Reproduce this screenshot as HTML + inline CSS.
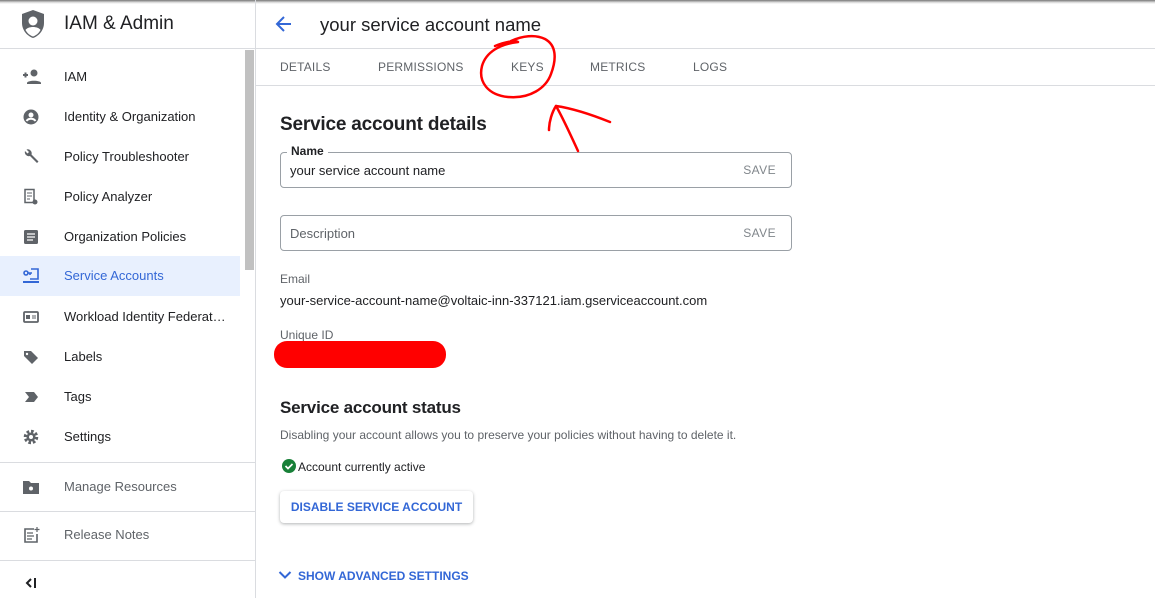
<!DOCTYPE html>
<html><head><meta charset="utf-8"><style>
*{box-sizing:border-box;margin:0;padding:0}
body{width:1155px;height:598px;overflow:hidden;background:#fff;font-family:"Liberation Sans",Arial,sans-serif;position:relative;color:#202124}
.abs{position:absolute}
.topsh{position:absolute;left:0;top:0;width:1155px;height:4px;background:linear-gradient(#777,#ddd 60%,#fff)}
.side{position:absolute;left:0;top:0;width:256px;height:598px;border-right:1px solid #dadce0}
.nav{position:absolute;left:0;width:240px;height:40px;font-size:13px;line-height:40px;padding-left:64px;color:#202124}
.nav svg{position:absolute;left:22px;top:11px}
.tab{position:absolute;top:60px;font-size:12px;color:#5f6368;letter-spacing:.2px}
.lbl{font-size:12px;color:#5f6368}
.field{position:absolute;left:280px;width:512px;height:36px;border:1px solid #9aa0a6;border-radius:4px}
.save{position:absolute;right:15px;top:10px;font-size:12px;color:#80868b;letter-spacing:.4px}
</style></head><body>
<div class="topsh"></div>
<div class="side">
  <svg class="abs" style="left:20px;top:9px" width="26" height="30" viewBox="0 0 26 30"><path d="M13 1 L24 5 V14 C24 21 19 27 13 29 C7 27 2 21 2 14 V5 Z" fill="#5f6368"/><circle cx="13" cy="12" r="4.5" fill="#fff"/><path d="M5.5 21 C8 17 18 17 20.5 21 C18.5 24.5 16 26.5 13 27.5 C10 26.5 7.5 24.5 5.5 21Z" fill="#fff"/></svg>
  <div class="abs" style="left:64px;top:13px;font-size:19px">IAM &amp; Admin</div>
  <div class="abs" style="left:0;top:48px;width:255px;height:1px;background:#dadce0"></div>
  <div class="abs" style="left:245px;top:50px;width:9px;height:220px;background:#c1c1c1"></div>
  <div class="nav" style="top:57px"><svg width="20" height="18" viewBox="0 0 20 18"><path d="M1 7h5M3.5 4.5v5" stroke="#5f6368" stroke-width="2"/><circle cx="12" cy="5" r="3.5" fill="#5f6368"/><path d="M5 15c0-3 14-3 14 0v1H5z" fill="#5f6368"/></svg>IAM</div>
  <div class="nav" style="top:97px"><svg width="18" height="18" viewBox="0 0 18 18"><circle cx="9" cy="9" r="7.5" fill="#5f6368"/><circle cx="9" cy="7" r="2.5" fill="#fff"/><path d="M4.5 13c2-3 7-3 9 0" stroke="#fff" stroke-width="2" fill="none"/></svg>Identity &amp; Organization</div>
  <div class="nav" style="top:137px"><svg width="18" height="18" viewBox="0 0 18 18"><path d="M3 3a4 4 0 0 0 5 5l7 7 1.5-1.5-7-7a4 4 0 0 0-5-5l2.5 2.5-1.5 1.5z" fill="#5f6368"/></svg>Policy Troubleshooter</div>
  <div class="nav" style="top:177px"><svg width="18" height="18" viewBox="0 0 18 18"><rect x="3" y="1.5" width="9" height="13" fill="none" stroke="#5f6368" stroke-width="1.5"/><path d="M5 5h5M5 8h5M5 11h3" stroke="#5f6368"/><circle cx="13" cy="14" r="2.5" fill="#5f6368"/></svg>Policy Analyzer</div>
  <div class="nav" style="top:217px"><svg width="18" height="18" viewBox="0 0 18 18"><rect x="2" y="2" width="14" height="14" rx="1.5" fill="#5f6368"/><path d="M5 6h8M5 9h8M5 12h6" stroke="#fff" stroke-width="1.2"/></svg>Organization Policies</div>
  <div class="nav" style="top:256px;background:#e8f0fe;color:#3367d6"><svg width="18" height="18" viewBox="0 0 18 18"><circle cx="4" cy="6" r="2" fill="none" stroke="#3367d6" stroke-width="1.6"/><path d="M6 6h4M8 6v2" stroke="#3367d6" stroke-width="1.6"/><path d="M9 2h7v10H8" fill="none" stroke="#3367d6" stroke-width="1.6"/><path d="M1 15h16" stroke="#3367d6" stroke-width="2"/></svg>Service Accounts</div>
  <div class="nav" style="top:297px"><svg width="18" height="18" viewBox="0 0 18 18"><rect x="2" y="4" width="14" height="10" rx="1" fill="none" stroke="#5f6368" stroke-width="1.8"/><rect x="4" y="7" width="4" height="4" fill="#5f6368"/><path d="M10 8h4M10 10h4" stroke="#5f6368"/></svg>Workload Identity Federat…</div>
  <div class="nav" style="top:337px"><svg width="18" height="18" viewBox="0 0 18 18"><path d="M2 3h7l7 7-6 6-8-8z" fill="#5f6368"/><circle cx="5" cy="6" r="1.2" fill="#fff"/></svg>Labels</div>
  <div class="nav" style="top:377px"><svg width="18" height="18" viewBox="0 0 18 18"><path d="M3 4h9l4 5-4 5H3l4-5z" fill="#5f6368"/></svg>Tags</div>
  <div class="nav" style="top:417px"><svg width="18" height="18" viewBox="0 0 18 18"><circle cx="9" cy="9" r="5.5" fill="none" stroke="#5f6368" stroke-width="3.5" stroke-dasharray="2.5 1.8"/><circle cx="9" cy="9" r="4.5" fill="#5f6368"/><circle cx="9" cy="9" r="2" fill="#fff"/></svg>Settings</div>
  <div class="abs" style="left:0;top:462px;width:255px;height:1px;background:#dadce0"></div>
  <div class="nav" style="top:467px;color:#5f6368"><svg width="18" height="18" viewBox="0 0 18 18"><path d="M1 3h6l2 2h8v11H1z" fill="#5f6368"/><circle cx="9" cy="10.5" r="2" fill="#fff"/></svg>Manage Resources</div>
  <div class="abs" style="left:0;top:511px;width:255px;height:1px;background:#dadce0"></div>
  <div class="nav" style="top:515px;color:#5f6368"><svg width="18" height="18" viewBox="0 0 18 18"><path d="M12 3H3v13h12V8" fill="none" stroke="#5f6368" stroke-width="1.6"/><path d="M5 7h6M5 10h7M5 13h5M15 1v5M12.5 3.5h5" stroke="#5f6368" stroke-width="1.2"/></svg>Release Notes</div>
  <div class="abs" style="left:0;top:560px;width:255px;height:1px;background:#dadce0"></div>
  <svg class="abs" style="left:25px;top:577px" width="14" height="12" viewBox="0 0 14 12"><path d="M6 2L2 6l4 4" stroke="#202124" stroke-width="2" fill="none"/><path d="M10 1v10" stroke="#202124" stroke-width="2"/></svg>
</div>

<svg class="abs" style="left:275px;top:15px" width="18" height="18" viewBox="0 0 18 18"><path d="M16 9H3M9 2L2 9l7 7" stroke="#3367d6" stroke-width="2" fill="none"/></svg>
<div class="abs" style="left:320px;top:14px;font-size:18.5px">your service account name</div>
<div class="abs" style="left:256px;top:48px;width:899px;height:1px;background:#dadce0"></div>
<div class="tab" style="left:280px">DETAILS</div>
<div class="tab" style="left:378px">PERMISSIONS</div>
<div class="tab" style="left:511px">KEYS</div>
<div class="tab" style="left:590px">METRICS</div>
<div class="tab" style="left:693px">LOGS</div>
<div class="abs" style="left:256px;top:85px;width:899px;height:1px;background:#dadce0"></div>

<div class="abs" style="left:280px;top:114px;font-size:19px;font-weight:bold;letter-spacing:-.2px">Service account details</div>
<div class="field" style="top:152px"><div class="abs" style="left:6px;top:-9px;background:#fff;padding:0 4px;font-size:12px;font-weight:bold">Name</div><div class="abs" style="left:9px;top:10px;font-size:13px">your service account name</div><div class="save">SAVE</div></div>
<div class="field" style="top:215px"><div class="abs" style="left:9px;top:10px;font-size:13px;color:#5f6368">Description</div><div class="save">SAVE</div></div>
<div class="abs lbl" style="left:280px;top:272px">Email</div>
<div class="abs" style="left:280px;top:293px;font-size:13px">your-service-account-name@voltaic-inn-337121.iam.gserviceaccount.com</div>
<div class="abs lbl" style="left:280px;top:328px">Unique ID</div>
<div class="abs" style="left:274px;top:341px;width:172px;height:27px;background:#ff0000;border-radius:13px"></div>

<div class="abs" style="left:280px;top:398px;font-size:17px;font-weight:bold;letter-spacing:-.2px">Service account status</div>
<div class="abs" style="left:280px;top:428px;font-size:12px;color:#5f6368">Disabling your account allows you to preserve your policies without having to delete it.</div>
<svg class="abs" style="left:282px;top:459px" width="14" height="14" viewBox="0 0 14 14"><circle cx="7" cy="7" r="7" fill="#188038"/><path d="M3.5 7l2.5 2.5 4.5-4.5" stroke="#fff" stroke-width="1.7" fill="none"/></svg>
<div class="abs" style="left:298px;top:460px;font-size:12px">Account currently active</div>
<div class="abs" style="left:280px;top:491px;width:193px;height:32px;border-radius:4px;box-shadow:0 1px 3px rgba(60,64,67,.4);font-size:12px;font-weight:bold;color:#3367d6;line-height:32px;text-align:center;letter-spacing:0">DISABLE SERVICE ACCOUNT</div>
<svg class="abs" style="left:278px;top:570px" width="14" height="10" viewBox="0 0 14 10"><path d="M1.5 2l5.5 5.5 5.5-5.5" stroke="#3367d6" stroke-width="2" fill="none"/></svg>
<div class="abs" style="left:298px;top:569px;font-size:12px;font-weight:bold;color:#3367d6;letter-spacing:0">SHOW ADVANCED SETTINGS</div>

<svg class="abs" style="left:0;top:0" width="1155" height="598" viewBox="0 0 1155 598">
<g fill="none" stroke="#f00" stroke-width="2.5" stroke-linecap="round" stroke-linejoin="round">
<path d="M495 46 C505 42 515 40 518 42 C500 44 486 52 482 66 C478 82 488 95 508 97 C530 99 546 88 551 74 C557 58 556 45 545 39 C535 34 522 36 511 41"/>
<path d="M578 151 C572 138 563 118 556 106 C552 112 549 122 549 130"/>
<path d="M556 106 C570 108 590 114 610 122"/>
</g></svg>
</body></html>
